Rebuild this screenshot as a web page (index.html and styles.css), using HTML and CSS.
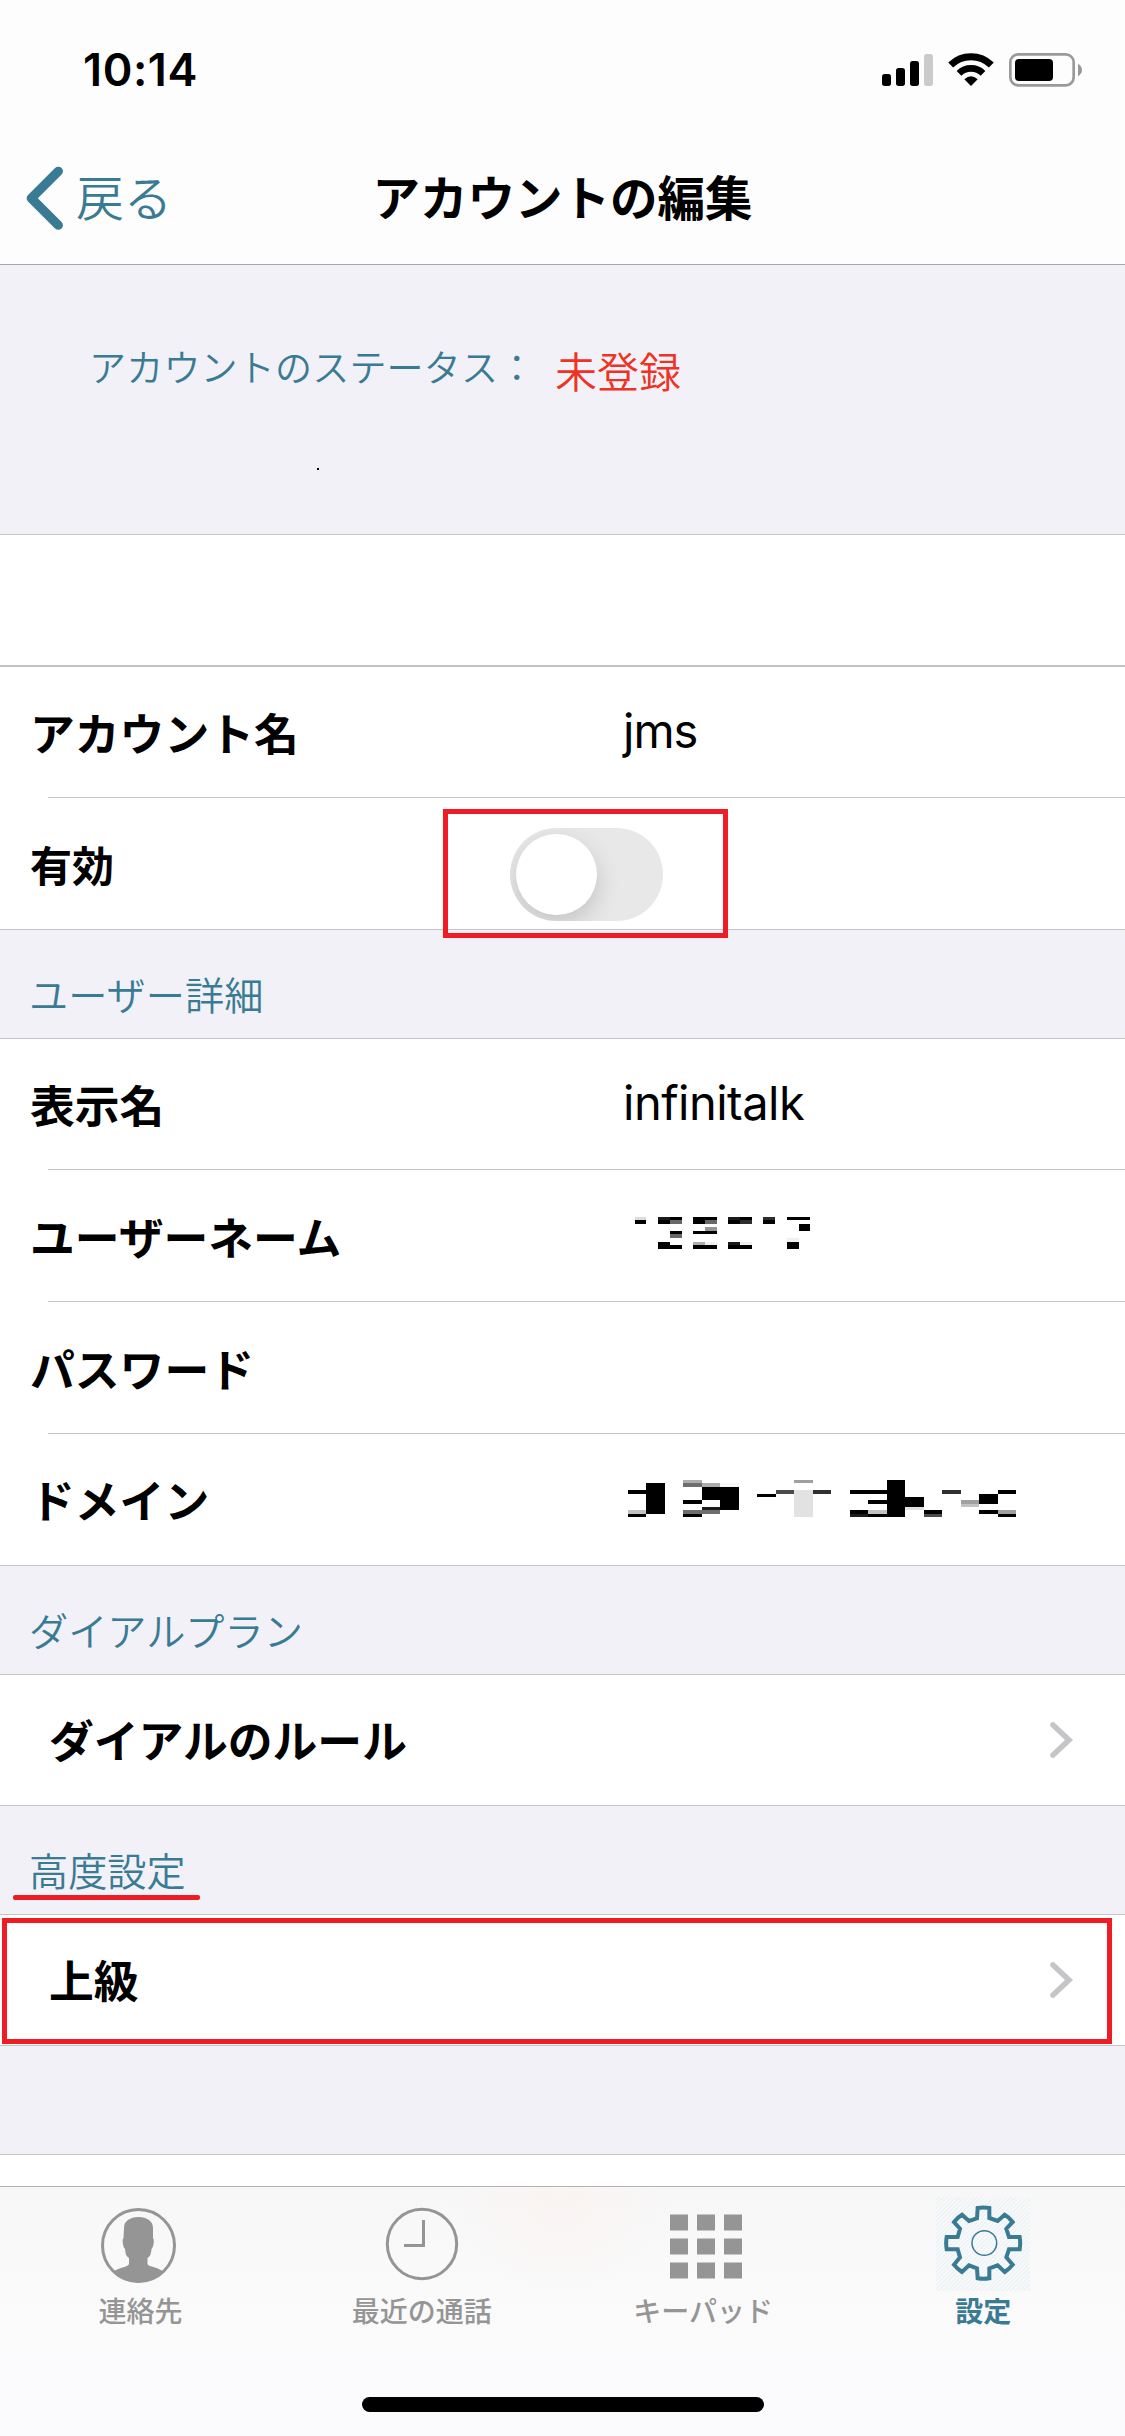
FILE: index.html
```html
<!DOCTYPE html>
<html lang="ja">
<head>
    <meta charset="UTF-8">
    <meta name="viewport" content="width=device-width, initial-scale=1.0">
    <title>アカウントの編集</title>
    <link rel="stylesheet" href="styles.css">
</head>
<body>
    <div class="phone">
        <header class="header">
            <div class="status-bar">
                <span class="time">10:14</span>
                <svg class="status-icons" viewBox="60 60 612 111">
                    <rect x="66" y="129" width="27" height="36" rx="8"/>
                    <rect x="108" y="111" width="27" height="54" rx="8"/>
                    <rect x="150" y="90" width="27" height="75" rx="8"/>
                    <rect x="192" y="69" width="27" height="96" rx="8" fill="#cbcbcb"/>
                    <path d="M272 102a87 87 0 0 1 122 0" fill="none" stroke="#000" stroke-width="21"/>
                    <path d="M297 127a51 51 0 0 1 72 0" fill="none" stroke="#000" stroke-width="20"/>
                    <path d="M313 145q20-18 40 0l-20 20z"/>
                    <rect x="451" y="70" width="190" height="93" rx="24" fill="none" stroke="#999" stroke-width="8"/>
                    <rect x="465" y="84" width="114" height="66" rx="12"/>
                    <path d="M654 98q12 7 12 19t-12 19z" fill="#999"/>
                </svg>
            </div>
            <div class="nav-bar">
                <a class="back">
                    <svg class="back-icon" viewBox="0 0 38 64"><path d="M32.3 5.3L5.3 32.2l27 27"/></svg>
                    <span>戻る</span>
                </a>
                <h1>アカウントの編集</h1>
            </div>
        </header>

        <main>
            <section class="account-status">
                <div class="status-line">
                    <span class="status-label">アカウントのステータス：</span>
                    <span class="status-value">未登録</span>
                </div>
                <div class="dot"></div>
            </section>

            <div class="list">
                <div class="row blank"></div>
                <div class="row inset">
                    <label>アカウント名</label>
                    <span class="value short">jms</span>
                </div>
                <div class="row switch-row">
                    <label>有効</label>
                    <div class="switch"><div class="knob"></div></div>
                    <div class="mark mark-switch"></div>
                </div>
            </div>

            <h2>ユーザー詳細</h2>
            <div class="list">
                <div class="row inset first">
                    <label>表示名</label>
                    <span class="value">infinitalk</span>
                </div>
                <div class="row inset">
                    <label>ユーザーネーム</label>
                    <svg class="mosaic user" viewBox="105 48 525 96" shape-rendering="crispEdges">
                        <path d="M105 57h33v12h-33zM210 48h36v9h-36zM174 57h36v12h-36zM210 90h36v9h-36zM174 123h36v9h36v12h-72zM279 48h72v9h-36v12h-36zM279 90h72v9h-72zM279 132h72v12h-72zM384 57h36v-9h36v9h-36v12h-36zM384 132h72v12h-72zM489 57h36v12h-36zM561 48h69v9h-69zM597 69h33v21h-33zM561 123h36v21h-36z"/>
                        <path fill="#1a1a1a" d="M174 48h36v9h-36zM384 48h36v9h-36zM384 123h36v9h-36z"/>
                        <path fill="#2d2d2d" d="M420 57h36v12h-36zM489 48h36v9h-36z"/>
                        <path fill="#686868" d="M210 57h36v12h-36zM210 99h36v12h-36zM315 57h36v12h-36z"/>
                        <path fill="#959595" d="M315 78h36v12h-36z"/>
                        <path fill="#adadad" d="M279 123h36v9h-36z"/>
                        <path fill="#dcdcdc" d="M105 48h33v9h-33z"/>
                        <path fill="#f0f0f0" d="M315 123h36v9h-36zM420 123h36v9h-36zM561 111h36v12h-36z"/>
                    </svg>
                </div>
                <div class="row inset">
                    <label>パスワード</label>
                </div>
                <div class="row">
                    <label>ドメイン</label>
                    <svg class="mosaic domain" viewBox="84 840 1164 111" shape-rendering="crispEdges">
                        <path d="M84 870h54v12h-54zM138 849h57v93h-57zM84 942h54v9h-54zM306 861h111v69h-57v-30h-54zM249 900h57v12h-57zM249 942h57v9h-57zM471 882h57v9h-57zM750 870h111v12h-111zM804 900h57v12h-57zM861 840h54v111h-54zM804 942h57v9h-57zM750 930h54v12h-54zM915 891h57v30h-57zM972 930h54v12h-54zM1137 882h57v30h-57zM1194 870h54v12h-54zM1137 930h57v12h-57zM1194 942h54v9h-54z"/>
                        <path fill="#1c1c1c" d="M306 921h54v9h-54zM750 942h54v9h-54z"/>
                        <path fill="#303030" d="M639 870h54v12h-54zM1026 870h57v12h-57z"/>
                        <path fill="#4b4b4b" d="M528 870h54v12h-54zM972 942h54v9h-54z"/>
                        <path fill="#6e6e6e" d="M249 849h57v12h-57zM249 930h111v12h-111z"/>
                        <path fill="#a0a0a0" d="M582 840h57v9h-57zM1083 900h54v12h-54zM1194 930h54v12h-54z"/>
                        <path fill="#adadad" d="M249 840h57v9h-57zM306 849h54v12h-54z"/>
                        <path fill="#c2c2c2" d="M84 930h54v12h-54zM1083 912h54v9h-54zM804 930h57v12h-57z"/>
                        <path fill="#e2e2e2" d="M582 870h57v81h-57zM915 921h57v9h-57z"/>
                        <path fill="#f6f6f6" d="M360 849h57v12h-57z"/>
                    </svg>
                </div>
            </div>

            <h2>ダイアルプラン</h2>
            <div class="list">
                <div class="row link">
                    <label>ダイアルのルール</label>
                    <svg class="chevron" viewBox="0 0 24 38"><path d="M4 4l16 15L4 34"/></svg>
                </div>
            </div>

            <h2>高度設定<span class="mark-line"></span></h2>
            <div class="list">
                <div class="row link">
                    <label>上級</label>
                    <svg class="chevron" viewBox="0 0 24 38"><path d="M4 4l16 15L4 34"/></svg>
                    <div class="mark mark-row"></div>
                </div>
            </div>
            <div class="gap"></div>
            <div class="next-row"></div>
        </main>

        <footer class="tab-bar">
            <nav class="tabs">
                <a class="tab">
                    <svg class="tab-icon" viewBox="0 0 94 94">
                        <defs><clipPath id="face"><circle cx="44.500" cy="48.500" r="37"/></clipPath></defs>
                        <g clip-path="url(#face)">
                            <path fill="#959595" d="M30 31c0-7 6-11 14.500-11s14.500 4 14.500 11v10c1.500 1 1 8-1.500 11-.5 5-1 7-4 9v6c1 3 8 2 15 7v14H20V74c7-4 14-4 15-7v-6c-3-2-3.500-4-4-9-2.500-3-3-10-1.500-11z"/>
                        </g>
                        <circle cx="44.500" cy="48.500" r="36" fill="none" stroke="#959595" stroke-width="3"/>
                    </svg>
                    <span>連絡先</span>
                </a>
                <a class="tab">
                    <svg class="tab-icon" viewBox="0 0 94 94">
                        <circle cx="47" cy="47" r="34.700" fill="none" stroke="#959595" stroke-width="3"/>
                        <path d="M48.500 23v25.500H29" fill="none" stroke="#959595" stroke-width="3"/>
                    </svg>
                    <span>最近の通話</span>
                </a>
                <a class="tab">
                    <svg class="tab-icon" viewBox="0 0 94 94">
                        <path fill="#959595" d="M14 17.500h18v16H14zM41 17.500h18v16H41zM68 17.500h18v16H68zM14 41.500h18v16H14zM41 41.500h18v16H41zM68 41.500h18v16H68zM14 65.500h18v16H14zM41 65.500h18v16H41zM68 65.500h18v16H68z"/>
                    </svg>
                    <span>キーパッド</span>
                </a>
                <a class="tab active">
                    <svg class="tab-icon hatch" viewBox="-142 -138 282 282">
                        <path d="M-19-74L-17-105q17-3 35 0V-75L43-66 64-85Q78-77 88-63L69-43 77-18H109q3 18 0 37H77L69 43 88 65Q78 77 64 87L43 67 18 76V106q-18 3-35 0L-19 76-43 67-64 87Q-78 77-88 65L-70 43-77 19H-110q-3-19 0-37H-77L-70-43-88-63Q-78-77-64-85L-43-66z" fill="none" stroke="#3a7b94" stroke-width="12"/>
                        <circle cx="3" cy="0" r="37" fill="none" stroke="#3a7b94" stroke-width="4.500"/>
                    </svg>
                    <span>設定</span>
                </a>
            </nav>
            <div class="home-indicator"></div>
        </footer>
    </div>
</body>
</html>
```
FILE: styles.css
```css
* {
    margin: 0;
    padding: 0;
    box-sizing: border-box;
}

body {
    width: 1125px;
    font-family: "Inter", "Noto Sans CJK JP", sans-serif;
    color: #000;
    background-color: #f2f1f7;
}

svg {
    display: block;
    flex-shrink: 0;
}

.phone {
    height: 2436px;
    display: flex;
    flex-direction: column;
    overflow: hidden;
}

.header {
    height: 265px;
    background-color: #fdfdfd;
    border-bottom: 1px solid #a8a8ac;
}

.status-bar {
    height: 132px;
    padding: 6px 41px 0 83px;
    display: flex;
    align-items: center;
    justify-content: space-between;
}

.time {
    font-size: 45px;
    font-weight: 600;
    letter-spacing: 0.6px;
}

.status-icons {
    width: 204px;
    height: 37px;
}

.nav-bar {
    height: 132px;
    display: grid;
    grid-template-columns: 350px 1fr 350px;
    align-items: center;
}

.back {
    padding-left: 26px;
    display: flex;
    align-items: center;
    gap: 12px;
    font-size: 48px;
    font-weight: 350;
    color: #3a7b94;
}

.back span {
    padding-bottom: 7px;
}

.back-icon {
    width: 38px;
    height: 64px;
    fill: none;
    stroke: #3a7b94;
    stroke-width: 9.3;
    stroke-linecap: round;
    stroke-linejoin: round;
}

h1 {
    padding-bottom: 6px;
    font-size: 47.5px;
    font-weight: bold;
    text-align: center;
    white-space: nowrap;
}

.account-status {
    height: 269px;
    padding-top: 74px;
    padding-left: 89px;
}

.status-line {
    display: flex;
    align-items: center;
    height: 60px;
    white-space: nowrap;
}

.status-label {
    width: 466px;
    font-size: 37px;
    font-weight: 350;
    letter-spacing: 0.2px;
    color: #3a7b94;
    line-height: 54px;
}

.status-value {
    font-size: 42px;
    font-weight: 350;
    color: #ee3224;
}

.dot {
    width: 2px;
    height: 2px;
    margin: 69px 0 0 228px;
    background-color: #000;
}

.list {
    background-color: #fff;
    border-top: 1px solid #c5c5c8;
}

.row {
    position: relative;
    height: 132px;
    padding: 2px 0 0 30px;
    display: flex;
    align-items: center;
    border-bottom: 1px solid #c5c5c8;
}

.row.blank {
    border-bottom: 2px solid #c3c3c3;
}

/* separator starts a little to the right of the label */
.row.inset {
    height: 131px;
    border-bottom: none;
    background: linear-gradient(#c5c5c5, #c5c5c5) 48px 100% / 1077px 1px no-repeat;
}

.row.inset + .row.inset {
    height: 132px;
}

.row label {
    width: 592px;
    padding-bottom: 4px;
    font-size: 44.8px;
    font-weight: bold;
    white-space: nowrap;
}

.value {
    padding-left: 1px;
    padding-bottom: 6px;
    font-size: 47px;
    letter-spacing: -0.5px;
}

.value.short {
    letter-spacing: -1px;
}

.row.switch-row label {
    width: 480px;
    padding-bottom: 2px;
    font-size: 42px;
}

.switch {
    width: 153px;
    height: 93px;
    padding: 6px;
    margin-top: 20px;
    border-radius: 47px;
    background-color: #e8e8e8;
    overflow: hidden;
}

.knob {
    width: 81px;
    height: 81px;
    border-radius: 50%;
    background-color: #fff;
    box-shadow: 0 9px 24px rgba(0, 0, 0, 0.16);
}

h2 {
    position: relative;
    height: 108px;
    padding: 18px 0 0 29px;
    display: flex;
    align-items: center;
    font-size: 39.2px;
    font-weight: 350;
    color: #3a7b94;
}

.mosaic.user {
    width: 175px;
    height: 32px;
    margin-left: 13px;
    margin-bottom: 8px;
}

.mosaic.domain {
    width: 388px;
    height: 37px;
    margin-left: 6px;
    margin-bottom: 4px;
}

.row.link {
    height: 131px;
    padding: 0 52px 0 49px;
    justify-content: space-between;
}

.chevron {
    width: 24px;
    height: 38px;
    fill: none;
    stroke: #c5c5c7;
    stroke-width: 5.5;
    stroke-linecap: round;
}

/* red markers */
.mark {
    position: absolute;
    border: 5px solid #ef1c23;
}

.mark-switch {
    left: 443px;
    top: 11px;
    width: 285px;
    height: 129px;
    z-index: 1;
}

.mark-row {
    left: 2px;
    top: 3px;
    width: 1110px;
    height: 126px;
}

.mark-line {
    position: absolute;
    left: 13px;
    bottom: 14px;
    width: 187px;
    height: 5px;
    border-radius: 2px;
    background-color: #ef1c23;
}

.gap {
    height: 108px;
}

.next-row {
    height: 32px;
    border-top: 1px solid #c5c5c8;
    background-color: #fff;
}

.tab-bar {
    height: 250px;
    border-top: 1px solid #b2b2b2;
    background: radial-gradient(circle at 560px 0, #faf4f2, rgba(250, 246, 245, 0) 110px), linear-gradient(#f7f7f7, #fafafa 45%, #fbfbfd 75%);
}

.tabs {
    height: 210px;
    padding-top: 10px;
    display: grid;
    grid-template-columns: repeat(4, 1fr);
    justify-items: center;
    align-items: start;
}

.tab {
    display: flex;
    flex-direction: column;
    align-items: center;
    font-size: 28px;
    font-weight: 500;
    line-height: 42px;
    color: #959595;
}

.tab-icon {
    width: 94px;
    height: 94px;
}

.active {
    padding-right: 2px;
    font-weight: 600;
    color: #3a7b94;
}

.hatch {
    background: repeating-linear-gradient(135deg, #f6f8f9 0, #f6f8f9 1.5px, #e9eff1 2px, #f6f8f9 3px);
}

.home-indicator {
    width: 402px;
    height: 15px;
    margin: 0 auto;
    border-radius: 8px;
    background-color: #000;
}
```
